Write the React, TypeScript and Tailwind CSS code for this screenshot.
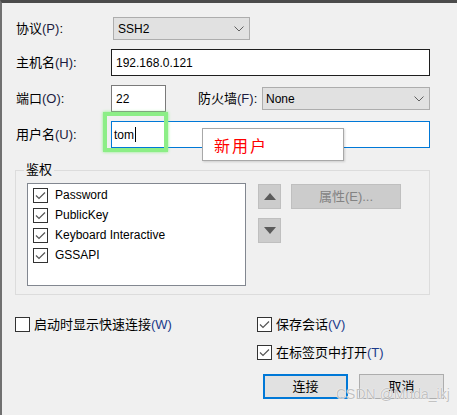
const Chevron = () => (
  <svg width="10" height="6" viewBox="0 0 10 6" className="shrink-0">
    <path d="M0.5 0.5 L5 5 L9.5 0.5" stroke="#606060" strokeWidth="1" fill="none" />
  </svg>
);

const Check = ({ checked }: { checked: boolean }) => (
  <div className="w-[15px] h-[15px] border border-[#333333] bg-white flex items-center justify-center shrink-0">
    {checked && (
      <svg width="13" height="13" viewBox="0 0 13 13">
        <path d="M2 6.5 L5 9.5 L11 3.5" stroke="#555555" strokeWidth="1.2" fill="none" />
      </svg>
    )}
  </div>
);

const Label = ({ zh, k, className = "w-[95px]" }: { zh: string; k: string; className?: string }) => (
  <div className={`${className} shrink-0 whitespace-nowrap`}>
    {zh}
    <span className="text-[#1c1c40]">({k})</span>:
  </div>
);

const methods = ["Password", "PublicKey", "Keyboard Interactive", "GSSAPI"];

export default function App() {
  return (
    <div className="w-[457px] h-[415px] bg-[#f0f0f0] border-t-[3px] border-t-[#4b4b4b] border-l-2 border-l-[#707070] relative overflow-hidden font-['Liberation_Sans','Noto_Sans_CJK_SC',sans-serif] text-[13px] text-black">
      <div className="pl-[14px]">
        {/* 协议 */}
        <div className="mt-[14px] flex h-[23px] items-center">
          <Label zh="协议" k="P" />
          <div className="ml-[2px] w-[137px] h-[23px] bg-[#e1e1e1] border border-[#adadad] flex items-center justify-between pl-[4px] pr-[5px] text-[12px]">
            <span>SSH2</span>
            <Chevron />
          </div>
        </div>

        {/* 主机名 */}
        <div className="mt-[9px] flex h-[27px] items-center">
          <Label zh="主机名" k="H" />
          <div className="w-[319px] h-[27px] bg-white border border-[#1e1e1e] flex items-center pl-[4px] text-[12px]">
            192.168.0.121
          </div>
        </div>

        {/* 端口 / 防火墙 */}
        <div className="mt-[9px] flex h-[27px] items-center">
          <Label zh="端口" k="O" />
          <div className="w-[55px] h-[27px] bg-white border border-[#7a7a7a] flex items-center pl-[4px] text-[12px]">
            22
          </div>
          <Label zh="防火墙" k="F" className="ml-[32px] w-[64px]" />
          <div className="w-[168px] h-[23px] bg-[#e1e1e1] border border-[#adadad] flex items-center justify-between pl-[3px] pr-[5px] text-[12px]">
            <span>None</span>
            <Chevron />
          </div>
        </div>

        {/* 用户名 */}
        <div className="mt-[9px] flex h-[27px] items-center">
          <Label zh="用户名" k="U" />
          <div className="relative w-[319px] h-[27px] bg-white border border-[#0078d7] flex items-center pl-[2px] text-[12px]">
            <span>tom</span>
            <span className="ml-[1px] w-[1px] h-[15px] bg-black" />
            <div className="absolute left-[-9px] top-[-10px] w-[65px] h-[40px] border-4 border-[#8cee86] shadow-[0_0_3px_#8cee86]" />
            <div className="absolute left-[90px] top-[6px] z-10 w-[142px] h-[33px] bg-white border border-[#a8a8a8] shadow-[1px_1px_2px_rgba(0,0,0,0.15)] flex items-center pl-[11px] text-[16px] tracking-[2px] text-[#ff0000] font-['Noto_Sans_CJK_SC',sans-serif]">
              新用户
            </div>
          </div>
        </div>
      </div>

      {/* 鉴权 */}
      <fieldset className="mt-[14px] ml-[13px] w-[415px] h-[133px] border border-[#dcdcdc]">
        <legend className="ml-[8px] px-[2px] leading-[16px]">鉴权</legend>
        <div className="flex">
          <div className="ml-[11px] mt-[5px] w-[219px] h-[103px] border border-[#828790] bg-white pt-[1px] pl-[5px] text-[12px]">
            {methods.map((m) => (
              <div key={m} className="h-[20px] flex items-center gap-[7px]">
                <Check checked />
                <span>{m}</span>
              </div>
            ))}
          </div>
          <div className="ml-[12px] mt-[6px] flex flex-col gap-[9px]">
            <div className="w-[23px] h-[25px] bg-[#cccccc] border border-[#bfbfbf] flex items-center justify-center">
              <svg width="12" height="7" viewBox="0 0 12 7">
                <polygon points="6,0 12,7 0,7" fill="#5a5a5a" />
              </svg>
            </div>
            <div className="w-[23px] h-[25px] bg-[#cccccc] border border-[#bfbfbf] flex items-center justify-center">
              <svg width="12" height="7" viewBox="0 0 12 7">
                <polygon points="0,0 12,0 6,7" fill="#5a5a5a" />
              </svg>
            </div>
          </div>
          <div className="ml-[10px] mt-[6px] w-[110px] h-[25px] bg-[#cccccc] border border-[#bfbfbf] flex items-center justify-center text-[#838383]">
            属性(E)...
          </div>
        </div>
      </fieldset>

      {/* 底部选项 */}
      <div className="mt-[22px] ml-[13px] flex">
        <div className="w-[242px] h-[15px] flex items-center gap-[4px]">
          <Check checked={false} />
          <span>
            启动时显示快速连接<span className="text-[#1a3a8a]">(W)</span>
          </span>
        </div>
        <div className="flex flex-col">
          <div className="h-[15px] flex items-center gap-[4px]">
            <Check checked />
            <span>
              保存会话<span className="text-[#1a3a8a]">(V)</span>
            </span>
          </div>
          <div className="mt-[13px] h-[15px] flex items-center gap-[4px]">
            <Check checked />
            <span>
              在标签页中打开<span className="text-[#1a3a8a]">(T)</span>
            </span>
          </div>
          <div className="mt-[14px] ml-[6px] flex gap-[11px]">
            <div className="w-[85px] h-[25px] bg-[#e1e1e1] border-2 border-[#0078d7] flex items-center justify-center">
              连接
            </div>
            <div className="w-[85px] h-[25px] bg-[#e1e1e1] border border-[#adadad] flex items-center justify-center">
              取消
            </div>
          </div>
        </div>
      </div>

      <div className="absolute left-[334px] top-[381px] text-[14px] text-[#c2c2c2] [text-shadow:0_0_1px_#ffffff,0_0_1px_#ffffff] whitespace-nowrap">
        CSDN @Muda_ikj
      </div>
    </div>
  );
}
